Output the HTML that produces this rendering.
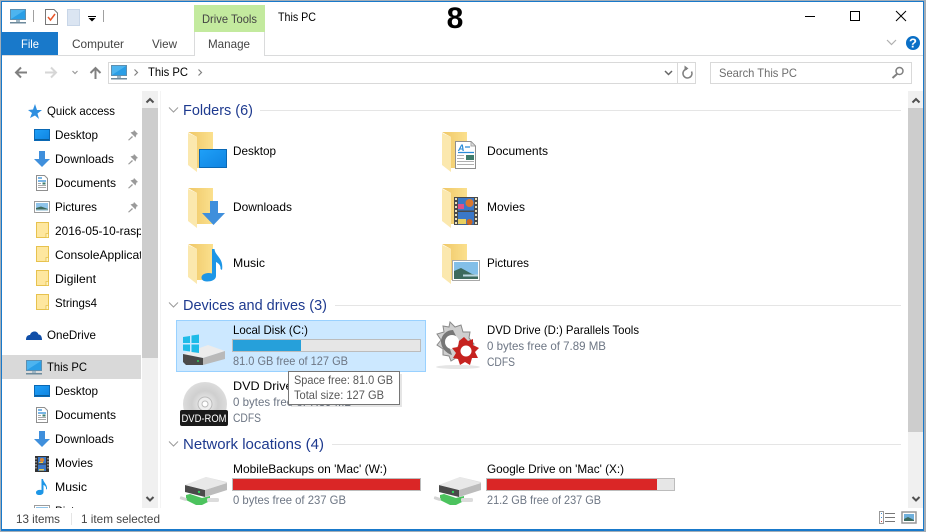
<!DOCTYPE html>
<html><head><meta charset="utf-8"><title>This PC</title>
<style>
html,body{margin:0;padding:0;width:926px;height:532px;overflow:hidden;background:#a3aeb8}
svg{display:block;position:absolute;left:0;top:0}
text{font-family:"Liberation Sans",sans-serif;font-size:12px;fill:#000}
.g{fill:#6d7684}
.h{font-size:15px;fill:#1e3a8f}
.r{fill:#444}
</style></head><body>
<svg width="926" height="532" viewBox="0 0 926 532" xmlns="http://www.w3.org/2000/svg">
<defs>
<linearGradient id="fb" x1="0" x2="1" y1="0" y2="0"><stop offset="0" stop-color="#efc766"/><stop offset="1" stop-color="#fbe08e"/></linearGradient>
<linearGradient id="sc" x1="0" x2="1" y1="0" y2="1"><stop offset="0" stop-color="#1fa0f8"/><stop offset="1" stop-color="#0f83e0"/></linearGradient>
<radialGradient id="cd"><stop offset="0" stop-color="#f4f4f4"/><stop offset=".6" stop-color="#cfcfcf"/><stop offset="1" stop-color="#dcdcdc"/></radialGradient>

<g id="folder">
<path d="M0 0H25V36H9V5Z" fill="url(#fb)"/>
<path d="M0 1L9 5V40L0 33Z" fill="#fbe8ae"/>
</g>
<g id="sfolder">
<path d="M.5 .5H12.5V15.5H.5Z" fill="#fee79f" stroke="#e7c24e"/>
<path d="M10 11.500H12.500V15.500H10Z" fill="#fff3c4" stroke="#e7c24e" stroke-width=".8"/>
</g>
<g id="pc">
<rect x=".5" y=".5" width="15" height="10" fill="#4db4ef" stroke="#5d8fb0"/>
<path d="M1 10L15 1V10Z" fill="#2a9ee6"/>
<rect x="6" y="11" width="4" height="2" fill="#9fb6c4"/>
<rect x="0" y="13" width="16" height="1.5" fill="#6d8a9c"/>
</g>
<g id="desk">
<rect x=".5" y=".5" width="15" height="11" fill="url(#sc)" stroke="#0a68b4"/>
<rect x="1" y="10" width="14" height="1" fill="#0a5f9e"/>
</g>
<path id="darr" d="M5 0H11V8H16L8 16L0 8H5Z" fill="#3f8fdc"/>
<g id="doc">
<path d="M.5 .5H8.5L11.5 3.5V15.5H.5Z" fill="#fff" stroke="#8f8f8f"/>
<path d="M2 3H6M2 6H10" stroke="#2a8bd8" stroke-width="1.2"/>
<path d="M2 8.500H5M2 10.500H10M2 12.500H10" stroke="#a8a8a8"/>
<rect x="6.500" y="7.500" width="3" height="2" fill="#3e7c6c"/>
</g>
<g id="pic">
<rect x=".5" y=".5" width="15" height="11" fill="#fff" stroke="#9c9c9c"/>
<rect x="2" y="2" width="12" height="8" fill="#8fc4ea"/>
<path d="M2 7L7 5.500L14 8V10H2Z" fill="#3d6a5d"/>
<rect x="2" y="8.500" width="12" height="1.500" fill="#bfd9e6"/>
</g>
<g id="film">
<rect x="0" y="0" width="14" height="16" fill="#333"/>
<rect x="3" y="1" width="8" height="6.500" fill="#3b78c8"/>
<rect x="3" y="8.500" width="8" height="6.500" fill="#3b78c8"/>
<circle cx="7" cy="4" r="2" fill="#d83"/>
<path d="M4 7H8V6H4ZM4 14.500H9V13H4Z" fill="#e8c84a"/>
<path d="M1 2V14M13 2V14" stroke="#ddd" stroke-dasharray="1.500 1.500"/>
</g>
<path id="note" d="M6.500 0H8C8.500 4 12.500 5 12 10.500L11 10C11.500 8 10 6.500 8.500 6V13C8.500 15 6.500 16 4.500 16C2 16 1 15 1 13.500C1 11.500 3.500 10.500 6.500 11Z" fill="#1d96e6"/>
<path id="pin" d="M6 0L10 4L8.500 4.500L7.500 7.500L2.500 2.500L5.500 1.500ZM4 6L0 10L1 10.500L5 7Z" fill="#9a9a9a"/>
<g id="netdrive">
<path d="M5 9L26 1L47 6L47 14L25 21L5 15Z" fill="#dedede"/>
<path d="M5 9L25 14V21L5 16Z" fill="#4a4a4a"/>
<path d="M25 14L47 7V14L25 21Z" fill="#bcbcbc"/>
<path d="M5 9L26 1L47 7L25 14Z" fill="#e8e8e8"/>
<circle cx="19" cy="16" r="1.200" fill="#2fd05a"/>
<path d="M6 19L10 18L22 22L30 20V25L22 29H16L6 24Z" fill="#4cc35e"/>
<rect x="0" y="21" width="7" height="3" rx="1" fill="#d4d4d4" transform="rotate(18 3 22)"/>
<rect x="27" y="22" width="12" height="4" rx="1.500" fill="#dcdcdc"/>
</g>
</defs>

<!-- window -->
<rect x="1" y="1" width="923" height="530" fill="#1979ca"/>
<rect x="2" y="2" width="921" height="527" fill="#fff"/>

<!-- quick access toolbar -->
<use href="#pc" x="10" y="9"/>
<rect x="33" y="10" width="1" height="12" fill="#a0a0a0"/>
<path d="M45.500 9.500H54L57.500 13V24.500H45.500Z" fill="#fff" stroke="#777"/>
<path d="M48 17L50.500 20L55 14" fill="none" stroke="#e8562a" stroke-width="1.500"/>
<path d="M67.500 9.500H79.500V25.500H67.500Z" fill="#dbe5f2" stroke="#c8d6e8"/>
<rect x="88" y="16" width="8" height="1" fill="#000"/>
<path d="M88.500 18H95.500L92 21.500Z" fill="#000"/>
<rect x="103" y="10" width="1" height="12" fill="#a0a0a0"/>

<!-- ribbon -->
<rect x="194" y="5" width="71" height="27" fill="#c3ea9e"/>
<text x="202" y="23" textLength="55" lengthAdjust="spacingAndGlyphs" style="fill:#444">Drive Tools</text>
<text x="278" y="21" textLength="38" lengthAdjust="spacingAndGlyphs">This PC</text>
<text x="455" y="28" text-anchor="middle" style="font-size:30px;font-weight:bold">8</text>

<path d="M805 16.500H815" stroke="#000"/>
<rect x="850.500" y="11.500" width="9" height="9" fill="none" stroke="#000"/>
<path d="M896 11L906 21M906 11L896 21" stroke="#000"/>

<rect x="2" y="55" width="921" height="1" fill="#dadbdc"/>
<rect x="2" y="32" width="56" height="23" fill="#1979ca"/>
<text x="21" y="48" textLength="18" lengthAdjust="spacingAndGlyphs" style="fill:#fff">File</text>
<text x="72" y="48" textLength="52" lengthAdjust="spacingAndGlyphs" style="fill:#444">Computer</text>
<text x="152" y="48" textLength="25" lengthAdjust="spacingAndGlyphs" style="fill:#444">View</text>
<path d="M194.500 32V55M264.500 32V55" stroke="#dadbdc"/>
<rect x="195" y="32" width="69" height="24" fill="#fff"/>
<text x="208" y="48" textLength="42" lengthAdjust="spacingAndGlyphs" style="fill:#444">Manage</text>
<path d="M887 40L891.500 44.500L896 40" fill="none" stroke="#b0b0b0" stroke-width="1.200"/>
<circle cx="913" cy="43" r="7" fill="#0a6fc6"/>
<text x="913" y="47.500" text-anchor="middle" style="fill:#fff;font-size:13px;font-weight:bold">?</text>

<!-- nav -->
<path d="M27 72.500H17M21 67.500L16 72.500L21 77.500" fill="none" stroke="#808080" stroke-width="2"/>
<path d="M45 72.500H55M51 67.500L56 72.500L51 77.500" fill="none" stroke="#d6d6d6" stroke-width="2"/>
<path d="M72.500 71L75 73.500L77.500 71" fill="none" stroke="#9a9a9a" stroke-width="1.200"/>
<path d="M95.500 79V69M90.500 73L95.500 68L100.500 73" fill="none" stroke="#808080" stroke-width="2"/>
<rect x="108.500" y="62.500" width="587" height="21" fill="#fff" stroke="#d9d9d9"/>
<use href="#pc" x="111" y="65"/>
<path d="M134.500 69.500L137.500 72.500L134.500 75.500" fill="none" stroke="#808080" stroke-width="1.200"/>
<text x="148" y="76" textLength="40" lengthAdjust="spacingAndGlyphs">This PC</text>
<path d="M198.500 69.500L201.500 72.500L198.500 75.500" fill="none" stroke="#808080" stroke-width="1.200"/>
<path d="M665 71L668.500 74.500L672 71" fill="none" stroke="#666" stroke-width="1.500"/>
<rect x="677" y="63" width="1" height="20" fill="#d9d9d9"/>
<path d="M691.500 71.500A4.500 4.500 0 1 1 687 69" fill="none" stroke="#808080" stroke-width="1.500"/>
<path d="M684.500 65.500L688.500 68.500L684.500 71Z" fill="#808080"/>
<rect x="710.500" y="62.500" width="201" height="21" fill="#fff" stroke="#d9d9d9"/>
<text x="719" y="77" textLength="78" lengthAdjust="spacingAndGlyphs" style="fill:#6d6d6d">Search This PC</text>
<circle cx="899.500" cy="71" r="3.500" fill="none" stroke="#808080" stroke-width="1.500"/>
<path d="M897 74L892.500 78" stroke="#808080" stroke-width="2"/>

<!-- sidebar -->
<rect x="2" y="355" width="139" height="24" fill="#d9d9d9"/>
<g>
<path d="M35 104L37 110H42L37.500 113.500L39 119L35 115.500L30 118L32 113L28 110L33 109.500Z" fill="#2f8fe0"/>
<text x="47" y="115" textLength="68" lengthAdjust="spacingAndGlyphs">Quick access</text>
<use href="#desk" x="34" y="129"/>
<text x="55" y="139" textLength="43" lengthAdjust="spacingAndGlyphs">Desktop</text>
<use href="#pin" x="128" y="130"/>
<use href="#darr" x="34" y="151"/>
<text x="55" y="163" textLength="59" lengthAdjust="spacingAndGlyphs">Downloads</text>
<use href="#pin" x="128" y="154"/>
<use href="#doc" x="36" y="175"/>
<text x="55" y="187" textLength="61" lengthAdjust="spacingAndGlyphs">Documents</text>
<use href="#pin" x="128" y="178"/>
<use href="#pic" x="34" y="201"/>
<text x="55" y="211" textLength="42" lengthAdjust="spacingAndGlyphs">Pictures</text>
<use href="#pin" x="128" y="202"/>
<use href="#sfolder" x="36" y="222"/>
<svg x="0" y="222" width="141" height="20"><text x="55" y="13" textLength="97" lengthAdjust="spacingAndGlyphs">2016-05-10-raspbi</text></svg>
<use href="#sfolder" x="36" y="246"/>
<svg x="0" y="246" width="141" height="20"><text x="55" y="13" textLength="97" lengthAdjust="spacingAndGlyphs">ConsoleApplicatio</text></svg>
<use href="#sfolder" x="36" y="270"/>
<text x="55" y="283" textLength="41" lengthAdjust="spacingAndGlyphs">Digilent</text>
<use href="#sfolder" x="36" y="294"/>
<text x="55" y="307" textLength="42" lengthAdjust="spacingAndGlyphs">Strings4</text>
<path d="M26 340C26 336 28 335 30 335C31 331 37 330 38.500 334.500C41 334.500 42 337 42 340Z" fill="#0f4ea8"/>
<text x="47" y="339" textLength="49" lengthAdjust="spacingAndGlyphs">OneDrive</text>
<use href="#pc" x="26" y="360"/>
<text x="47" y="371" textLength="40" lengthAdjust="spacingAndGlyphs">This PC</text>
<use href="#desk" x="34" y="385"/>
<text x="55" y="395" textLength="43" lengthAdjust="spacingAndGlyphs">Desktop</text>
<use href="#doc" x="36" y="407"/>
<text x="55" y="419" textLength="61" lengthAdjust="spacingAndGlyphs">Documents</text>
<use href="#darr" x="34" y="431"/>
<text x="55" y="443" textLength="59" lengthAdjust="spacingAndGlyphs">Downloads</text>
<use href="#film" x="35" y="456"/>
<text x="55" y="467" textLength="38" lengthAdjust="spacingAndGlyphs">Movies</text>
<use href="#note" x="35" y="479"/>
<text x="55" y="491" textLength="32" lengthAdjust="spacingAndGlyphs">Music</text>
<svg x="0" y="500" width="141" height="8"><use href="#pic" x="34" y="5"/><text x="55" y="15" textLength="42" lengthAdjust="spacingAndGlyphs">Pictures</text></svg>
</g>

<!-- sidebar scrollbar -->
<rect x="142" y="91" width="16" height="417" fill="#f0f0f0"/>
<rect x="142" y="108" width="16" height="250" fill="#cdcdcd"/>
<path d="M146.500 102.500L150 99L153.500 102.500" fill="none" stroke="#505050" stroke-width="2"/>
<path d="M146.500 497L150 500.500L153.500 497" fill="none" stroke="#505050" stroke-width="2"/>
<rect x="160" y="91" width="1" height="417" fill="#f4f4f4"/>

<!-- main scrollbar -->
<rect x="908" y="91" width="15" height="417" fill="#f0f0f0"/>
<rect x="908" y="108" width="15" height="324" fill="#cdcdcd"/>
<path d="M912.500 102.500L916 99L919.500 102.500" fill="none" stroke="#505050" stroke-width="2"/>
<path d="M912.500 497L916 500.500L919.500 497" fill="none" stroke="#505050" stroke-width="2"/>

<!-- Folders -->
<path d="M169 107.500L173.500 112L178 107.500" fill="none" stroke="#9a9a9a"/>
<text class="h" x="183" y="115" textLength="70" lengthAdjust="spacingAndGlyphs">Folders (6)</text>
<rect x="260" y="110" width="641" height="1" fill="#e5e5e5"/>

<use href="#folder" x="188" y="132"/>
<rect x="199.500" y="149.500" width="27" height="18" fill="url(#sc)" stroke="#0a68b4"/>
<text x="233" y="155" textLength="43" lengthAdjust="spacingAndGlyphs">Desktop</text>

<use href="#folder" x="188" y="188"/>
<path d="M210 201H218V213H225L213.500 225L202 213H210Z" fill="#3f8fdc"/>
<text x="233" y="211" textLength="59" lengthAdjust="spacingAndGlyphs">Downloads</text>

<use href="#folder" x="188" y="244"/>
<path d="M212 249H214.500C215 256 224 258 222 270L220.500 269C221 265 218 263 216 262V276C216 280 211 281.500 207 281.500C203 281.500 201.500 279.500 201.500 277.500C201.500 274 207 272 212 273.500Z" fill="#1d96e6"/>
<text x="233" y="267" textLength="32" lengthAdjust="spacingAndGlyphs">Music</text>

<use href="#folder" x="442" y="132"/>
<path d="M455.500 141.500H471L475.500 146V168.500H455.500Z" fill="#fff" stroke="#8f8f8f"/>
<path d="M471 142V146H475" fill="#ddd" stroke="#aaa"/>
<text x="458" y="151" style="font-size:9px;fill:#2a8bd8;font-style:italic;font-weight:bold">A</text>
<path d="M465 147H470M458 152.500H474" stroke="#2a8bd8" stroke-width="1.200"/>
<path d="M457 155.500H464M457 158.500H464M457 161.500H474M457 164.500H474" stroke="#b0b0b0"/>
<rect x="466" y="155" width="8" height="5" fill="#3e7c6c"/>
<text x="487" y="155" textLength="61" lengthAdjust="spacingAndGlyphs">Documents</text>

<use href="#folder" x="442" y="188"/>
<rect x="454" y="197" width="24" height="28" fill="#4a4a4a"/>
<rect x="458" y="198" width="16" height="12.500" fill="#3b78c8"/>
<rect x="458" y="212" width="16" height="12.500" fill="#3b78c8"/>
<circle cx="469.500" cy="203" r="4" fill="#d9772e"/>
<circle cx="469.500" cy="222" r="3" fill="#c62"/>
<rect x="458" y="204" width="6" height="5" fill="#e0508a"/>
<rect x="458" y="219" width="8" height="5" fill="#e8d060"/>
<path d="M456 198V225M476 198V225" stroke="#e8e0c0" stroke-width="2" stroke-dasharray="2 2"/>
<text x="487" y="211" textLength="38" lengthAdjust="spacingAndGlyphs">Movies</text>

<use href="#folder" x="442" y="244"/>
<rect x="452.500" y="260.500" width="27" height="20" fill="#fff" stroke="#a8a8a8"/>
<rect x="454" y="262" width="24" height="17" fill="#83bfe8"/>
<path d="M454 271L461 268L472 274L478 275V279H454Z" fill="#3d6a5d"/>
<rect x="463" y="274.500" width="15" height="2" fill="#bcd6df"/>
<text x="487" y="267" textLength="42" lengthAdjust="spacingAndGlyphs">Pictures</text>

<!-- Devices -->
<path d="M169 302.500L173.500 307L178 302.500" fill="none" stroke="#9a9a9a"/>
<text class="h" x="183" y="310" textLength="144" lengthAdjust="spacingAndGlyphs">Devices and drives (3)</text>
<rect x="335" y="305" width="566" height="1" fill="#e5e5e5"/>

<rect x="176.500" y="320.500" width="249" height="51" fill="#cce8ff" stroke="#99d1ff"/>
<path d="M183 354L208 345L225 351L203 358Z" fill="#ececec"/>
<path d="M183 354L203 358V365H186L183 362Z" fill="#4a4a4a"/>
<path d="M203 358L225 351V359L203 365Z" fill="#b9b9b9"/>
<circle cx="198" cy="361" r="1" fill="#2fd05a"/>
<path d="M183 337L190 336V343H183ZM191.500 335.500L199 334.500V343H191.500ZM183 344.500H190V351.500L183 350.500ZM191.500 344.500H199V353L191.500 352Z" fill="#1ebbe8"/>
<text x="233" y="334" textLength="75" lengthAdjust="spacingAndGlyphs">Local Disk (C:)</text>
<rect x="232.500" y="339.500" width="188" height="12" fill="#e6e6e6" stroke="#bcbcbc"/>
<rect x="233" y="340" width="68" height="11" fill="#26a0da"/>
<text class="g" x="233" y="365" textLength="115" lengthAdjust="spacingAndGlyphs">81.0 GB free of 127 GB</text>

<circle cx="205" cy="404" r="22" fill="url(#cd)"/>
<circle cx="205" cy="404" r="7" fill="#eee" stroke="#bbb"/>
<circle cx="205" cy="404" r="3" fill="#fff" stroke="#bbb"/>
<rect x="180" y="410" width="48" height="16" rx="2" fill="#1a1a1a"/>
<text x="181.500" y="422" textLength="45" lengthAdjust="spacingAndGlyphs" style="fill:#fff;font-size:11px">DVD-ROM</text>
<text x="233" y="390" textLength="138" lengthAdjust="spacingAndGlyphs">DVD Drive (E:) Windows</text>
<text class="g" x="233" y="406" textLength="119" lengthAdjust="spacingAndGlyphs">0 bytes free of 7.89 MB</text>
<text class="g" x="233" y="422" textLength="28" lengthAdjust="spacingAndGlyphs">CDFS</text>

<!-- gear -->
<ellipse cx="458" cy="367" rx="22" ry="2" fill="#e5e5e5"/>
<path d="M450 322L455 327L461 325L463 332L470 332L469 338L474 344L466 347L458 345L459 356L451 361L449 356L443 355L443 349L437 345L441 340L437 334L444 332L443 326L449 327Z" fill="#cfcfcf" stroke="#8a8a8a"/>
<path d="M441 341A12 12 0 0 1 453 330L456 336A7 7 0 0 0 449 346L452 355C446 353 441 348 441 341Z" fill="#777"/>
<circle cx="452" cy="342" r="7" fill="#fff"/>
<path d="M464 337L468 341L473 339L473 345L479 348L475 352L478 358L472 358L470 365L465 362L460 365L458 359L453 358L456 353L452 348L458 347L459 341Z" fill="#c6221f"/>
<circle cx="466" cy="351" r="5.500" fill="#fff"/>
<text x="487" y="334" textLength="152" lengthAdjust="spacingAndGlyphs">DVD Drive (D:) Parallels Tools</text>
<text class="g" x="487" y="350" textLength="119" lengthAdjust="spacingAndGlyphs">0 bytes free of 7.89 MB</text>
<text class="g" x="487" y="366" textLength="28" lengthAdjust="spacingAndGlyphs">CDFS</text>

<!-- tooltip -->
<rect x="291" y="374" width="111" height="33" fill="#000" opacity=".1"/>
<rect x="288.500" y="371.500" width="111" height="33" fill="#fff" stroke="#767676"/>
<text x="294" y="384" textLength="99" lengthAdjust="spacingAndGlyphs" style="fill:#575757">Space free: 81.0 GB</text>
<text x="294" y="399" textLength="90" lengthAdjust="spacingAndGlyphs" style="fill:#575757">Total size: 127 GB</text>

<!-- Network -->
<path d="M169 441.500L173.500 446L178 441.500" fill="none" stroke="#9a9a9a"/>
<text class="h" x="183" y="449" textLength="141" lengthAdjust="spacingAndGlyphs">Network locations (4)</text>
<rect x="332" y="444" width="569" height="1" fill="#e5e5e5"/>

<use href="#netdrive" x="180" y="476"/>
<text x="233" y="473" textLength="154" lengthAdjust="spacingAndGlyphs">MobileBackups on 'Mac' (W:)</text>
<rect x="232.500" y="478.500" width="188" height="12" fill="#da2626" stroke="#bcbcbc"/>
<text class="g" x="233" y="504" textLength="113" lengthAdjust="spacingAndGlyphs">0 bytes free of 237 GB</text>

<use href="#netdrive" x="434" y="476"/>
<text x="487" y="473" textLength="137" lengthAdjust="spacingAndGlyphs">Google Drive on 'Mac' (X:)</text>
<rect x="486.500" y="478.500" width="188" height="12" fill="#e6e6e6" stroke="#bcbcbc"/>
<rect x="487" y="479" width="170" height="11" fill="#da2626"/>
<text class="g" x="487" y="504" textLength="114" lengthAdjust="spacingAndGlyphs">21.2 GB free of 237 GB</text>

<!-- status bar -->
<rect x="2" y="508" width="921" height="21" fill="#fff"/>
<text class="r" x="16" y="523" textLength="44" lengthAdjust="spacingAndGlyphs">13 items</text>
<rect x="71" y="513" width="1" height="12" fill="#e5e5e5"/>
<text class="r" x="81" y="523" textLength="79" lengthAdjust="spacingAndGlyphs">1 item selected</text>
<rect x="879.500" y="511.500" width="4" height="12" fill="#fff" stroke="#999"/>
<path d="M881 513.500H882M881 517.500H882" stroke="#3f8fdc"/>
<path d="M881 521.500H882" stroke="#c44"/>
<path d="M885 513.500H895M885 517.500H895M885 521.500H895" stroke="#777"/>
<rect x="902" y="512" width="14" height="11" fill="#fff" stroke="#999" stroke-width="1.500"/>
<rect x="904" y="514" width="10" height="7" fill="#6fb0dc"/>
<path d="M904 519L908 517L914 520V521H904Z" fill="#3d6a5d"/>
</svg>
</body></html>
